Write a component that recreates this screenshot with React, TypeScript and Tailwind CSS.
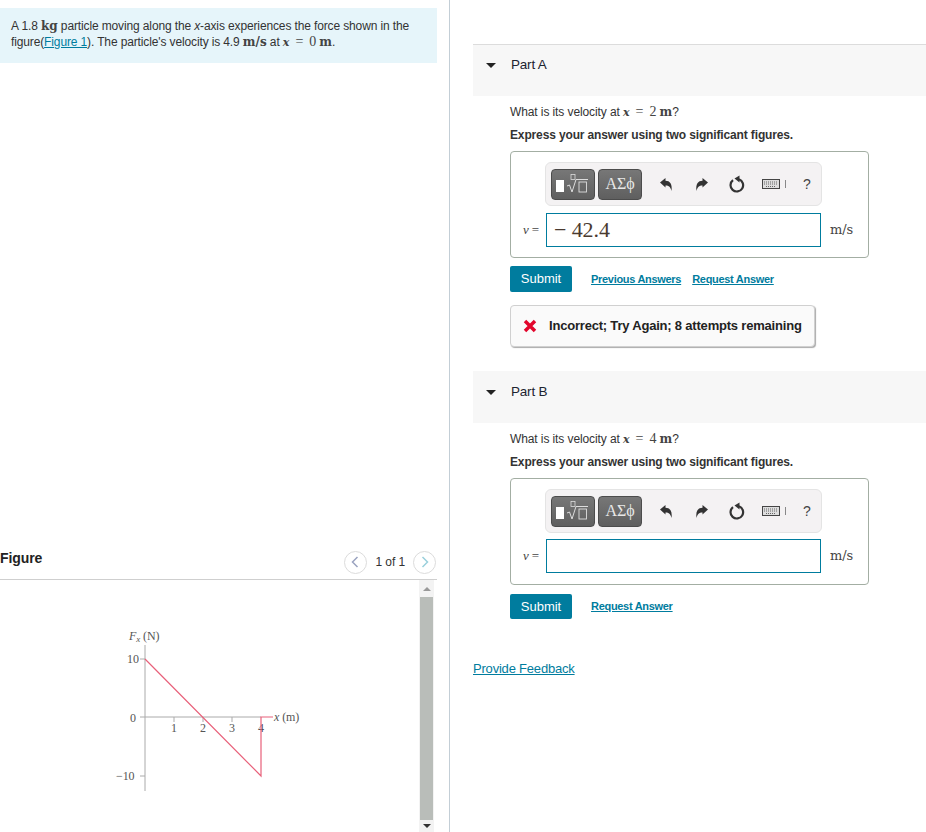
function Unit({ children }: { children: React.ReactNode }) {
  return <span className="font-['DejaVu_Serif',serif] font-bold text-[12px] tracking-normal text-[#444]">{children}</span>;
}

// x = value, spaced the way the typeset maths is in the reference
function Eq({ value, unit }: { value: string; unit: string }) {
  return (
    <span className="tracking-normal">
      <i className="font-['DejaVu_Serif',serif] font-bold text-[11px] text-[#444]">x</i>
      <span className="mx-[6px] font-['Liberation_Serif',serif] text-[14px] text-[#444]">=</span>
      <span className="mr-[3px] font-['Liberation_Serif',serif] text-[14px] text-[#444]">{value}</span>
      <Unit>{unit}</Unit>
    </span>
  );
}

function UndoIcon({ flip = false }: { flip?: boolean }) {
  return (
    <svg width="15" height="15" viewBox="0 0 15 15" className={flip ? "-scale-x-100" : ""}>
      <path d="M1 5.5 L6.5 1 V3.8 C11 3.8 13.5 7 12.5 14 C11.5 10 10 8.5 6.5 8.5 V10.5 Z" fill="#333" />
    </svg>
  );
}

function ToolBar() {
  return (
    <div className="w-[277px] h-[44px] ml-[34px] rounded-md border border-[#e4e4e4] bg-[#f4f2f3] flex items-center pl-[5px]">
      <div className="w-[44px] h-[31px] rounded-[4px] bg-gradient-to-b from-[#777777] to-[#5f5f5f] border border-[#4c4c4c] flex items-center justify-center gap-[2px]">
        <div className="w-[8px] h-[12px] bg-white mt-1" />
        <svg width="24" height="20" viewBox="0 0 24 20">
          <rect x="5" y="0.5" width="4" height="5" fill="none" stroke="#ddd" strokeWidth="0.8" />
          <path d="M1 12 L3.5 11 L6 18 L10 5.5 H22" fill="none" stroke="#ddd" strokeWidth="1" />
          <rect x="13" y="8" width="7.5" height="10" fill="none" stroke="#ddd" strokeWidth="0.9" />
        </svg>
      </div>
      <div className="ml-[3px] w-[44px] h-[31px] rounded-[4px] bg-gradient-to-b from-[#777777] to-[#5f5f5f] border border-[#4c4c4c] flex items-center justify-center text-[#e8e8e8] text-[16px] font-['Liberation_Serif',serif]">
        ΑΣϕ
      </div>
      <div className="ml-[17px]"><UndoIcon /></div>
      <div className="ml-[20px]"><UndoIcon flip /></div>
      <svg width="18" height="18" viewBox="0 0 18 18" className="ml-[19px]">
        <path d="M11 4.3 A6.3 6.3 0 1 1 5 5.2" fill="none" stroke="#333" strokeWidth="2.2" />
        <path d="M11.5 0.5 V7.5 L6.5 3.5 Z" fill="#333" />
      </svg>
      <svg width="18" height="10" viewBox="0 0 18 10" className="ml-[16px]">
        <rect x="0.5" y="0.5" width="17" height="9" fill="#ddd" stroke="#444" />
        <path d="M2 3 H16 M2 5 H16 M4 7.5 H14" stroke="#666" strokeWidth="1" strokeDasharray="1 1" />
      </svg>
      <div className="ml-[5px] w-px h-[8px] bg-[#888]" />
      <span className="ml-[17px] text-[14px] text-[#444]">?</span>
    </div>
  );
}

function AnswerBox({ value, rowGap }: { value?: string; rowGap: string }) {
  return (
    <div className="w-[359px] h-[107px] rounded-[4px] border border-[#a3aea3] bg-white pt-[10px]">
      <ToolBar />
      <div className={`flex items-center ${rowGap}`}>
        <div className="w-[35px] pr-[7px] text-right text-[13px] text-[#444] font-['Liberation_Serif',serif]">
          <i>v</i> =
        </div>
        <div className="w-[275px] h-[34px] border border-[#007c9e] flex items-center pl-[7px] pb-px text-[22px] text-[#4a3a30] font-['Liberation_Serif',serif]">
          {value}
        </div>
        <div className="ml-[9px] text-[13px] text-[#444] font-['DejaVu_Serif',serif]">m/s</div>
      </div>
    </div>
  );
}

function PartHeader({ label, line = false }: { label: string; line?: boolean }) {
  return (
    <div className={`h-[52px] bg-[#f7f7f7] flex items-center pb-[10px] ${line ? "border-t border-[#dcdcdc]" : ""}`}>
      <div className="ml-[13px] w-0 h-0 border-x-[5px] border-x-transparent border-t-[5px] border-t-[#222]" />
      <span className="ml-[15px] text-[13.5px] tracking-[-0.2px] text-[#1d2430]">{label}</span>
    </div>
  );
}

export default function App() {
  return (
    <div className="w-[926px] h-[832px] overflow-hidden flex bg-white font-['Liberation_Sans',sans-serif] text-[12px] tracking-[-0.1px] text-[#333]">
      {/* left column */}
      <div className="w-[450px] h-full shrink-0 border-r border-[#c3ced6] pt-[8px] flex flex-col">
        <div className="w-[437px] h-[55px] bg-[#e6f5fa] pl-[11px] pt-[10px] leading-[16px] tracking-[-0.13px]">
          <div className="h-[16px]">A 1.8 <Unit>kg</Unit> particle moving along the <i>x</i>-axis experiences the force shown in the</div>
          <div className="h-[16px]">figure(<a className="text-[#007c9e] underline">Figure 1</a>). The particle's velocity is 4.9 <Unit>m/s</Unit> at <Eq value="0" unit="m" />.</div>
        </div>

        <div className="w-[437px] h-[35px] mt-[482px] border-b border-[#cfcfcf] flex items-center">
          <span className="text-[14px] font-bold text-[#222] mb-[8px]">Figure</span>
          <div className="ml-auto flex items-center">
            <div className="w-[23px] h-[23px] rounded-full border border-[#dcdcdc] flex items-center justify-center text-[#9aa3c0]">
              <svg width="8" height="12" viewBox="0 0 8 12"><path d="M6.5 1 L1.5 6 L6.5 11" fill="none" stroke="currentColor" strokeWidth="1.5" /></svg>
            </div>
            <span className="ml-[9px] mr-[8px] text-[12px]">1 of 1</span>
            <div className="w-[23px] h-[23px] rounded-full border border-[#dcdcdc] flex items-center justify-center text-[#9ad0dc] mr-px">
              <svg width="8" height="12" viewBox="0 0 8 12"><path d="M1.5 1 L6.5 6 L1.5 11" fill="none" stroke="currentColor" strokeWidth="1.5" /></svg>
            </div>
          </div>
        </div>

        <div className="flex w-[437px] flex-1 min-h-0">
          <div className="flex-1">
            <svg width="220" height="180" viewBox="100 620 220 180" className="mt-[40px] ml-[100px]">
              <g fontFamily="'Liberation Serif', serif" fontSize="12" fill="#555">
                <text x="129" y="640"><tspan fontStyle="italic">F</tspan><tspan fontStyle="italic" fontSize="9" dy="2">x</tspan><tspan dy="-2"> (N)</tspan></text>
                <text x="127" y="663">10</text>
                <text x="130" y="722">0</text>
                <text x="116" y="780">−10</text>
                <text x="171" y="732">1</text>
                <text x="200" y="732">2</text>
                <text x="229" y="732">3</text>
                <text x="258" y="732">4</text>
                <text x="274" y="721"><tspan fontStyle="italic">x</tspan> (m)</text>
              </g>
              <path d="M145 645 V791 M140 659 H145 M140 776 H145 M140 717 H261 M174 717 V722 M203 717 V722 M232 717 V722" stroke="#aaa" fill="none" />
              <path d="M145 659 L261 776 V717 H273" stroke="#e8607a" strokeWidth="1.2" fill="none" />
            </svg>
          </div>
          <div className="w-[15px] mr-[3px] flex flex-col items-center bg-[#f3f3f3]">
            <div className="h-[17px] flex items-center">
              <div className="w-0 h-0 border-x-[4px] border-x-transparent border-b-[4px] border-b-[#999]" />
            </div>
            <div className="w-[13px] flex-1 bg-[#b9bdb9]" />
            <div className="h-[12px] flex items-center">
              <div className="w-0 h-0 border-x-[4px] border-x-transparent border-t-[4px] border-t-[#333]" />
            </div>
          </div>
        </div>
      </div>

      {/* right column */}
      <div className="flex-1 pl-[23px] pt-[44px]">
        <PartHeader label="Part A" line />
        <div className="pl-[37px]">
          <p className="mt-[8px] h-[16px] leading-[16px]">What is its velocity at <Eq value="2" unit="m" />?</p>
          <p className="mt-[7px] h-[16px] leading-[16px] font-bold tracking-[-0.14px]">Express your answer using two significant figures.</p>
          <div className="mt-[8px]"><AnswerBox value="− 42.4" rowGap="mt-[7px]" /></div>
          <div className="flex items-center mt-[8px]">
            <button className="w-[62px] h-[26px] rounded-[2px] bg-[#007c9e] text-white text-[13px] tracking-normal">Submit</button>
            <a className="ml-[19px] text-[11px] font-bold tracking-[-0.3px] text-[#007c9e] underline">Previous Answers</a>
            <a className="ml-[11px] text-[11px] font-bold tracking-[-0.3px] text-[#007c9e] underline">Request Answer</a>
          </div>
          <div className="mt-[13px] w-[305px] h-[42px] rounded-[4px] border border-[#d0d0d0] shadow-[1px_1px_1px_#aaa] bg-[#fafafa] flex items-center pl-[12px]">
            <svg width="14" height="14" viewBox="0 0 14 14">
              <path d="M2 2 L12 12 M12 2 L2 12" stroke="#e2062c" strokeWidth="3.5" />
            </svg>
            <span className="ml-[12px] text-[13px] font-bold tracking-[-0.2px] text-[#222]">Incorrect; Try Again; 8 attempts remaining</span>
          </div>
        </div>

        <div className="mt-[24px]"><PartHeader label="Part B" /></div>
        <div className="pl-[37px]">
          <p className="mt-[8px] h-[16px] leading-[16px]">What is its velocity at <Eq value="4" unit="m" />?</p>
          <p className="mt-[7px] h-[16px] leading-[16px] font-bold tracking-[-0.14px]">Express your answer using two significant figures.</p>
          <div className="mt-[8px]"><AnswerBox rowGap="mt-[6px]" /></div>
          <div className="flex items-center mt-[9px]">
            <button className="w-[62px] h-[25px] rounded-[2px] bg-[#007c9e] text-white text-[13px] tracking-normal">Submit</button>
            <a className="ml-[19px] text-[11px] font-bold tracking-[-0.3px] text-[#007c9e] underline">Request Answer</a>
          </div>
        </div>
        <a className="block mt-[40px] text-[13px] tracking-[-0.2px] text-[#007c9e] underline">Provide Feedback</a>
      </div>
    </div>
  );
}
